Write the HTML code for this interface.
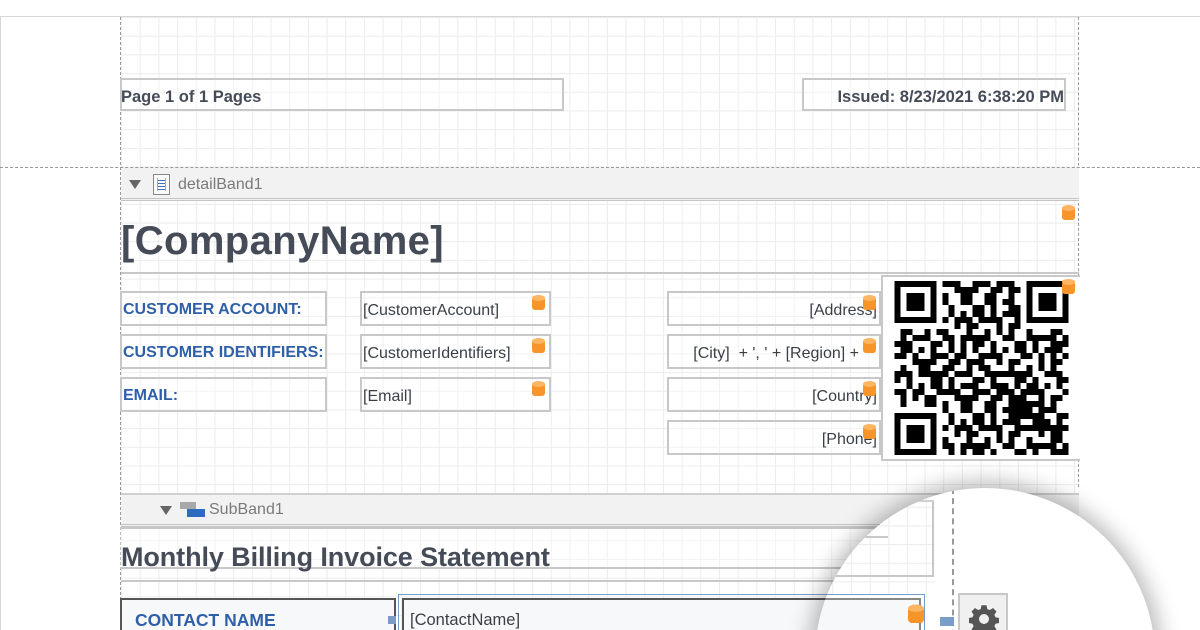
<!DOCTYPE html>
<html><head><meta charset="utf-8"><style>
*{margin:0;padding:0;box-sizing:border-box}
html,body{width:1200px;height:630px;overflow:hidden}
body{position:relative;background:#fff;font-family:"Liberation Sans",sans-serif}
.abs{position:absolute;white-space:nowrap}
.grid{left:121px;top:17px;width:958px;height:613px;background-color:#fff;
background-image:linear-gradient(#ececec 1px,transparent 1px),linear-gradient(90deg,#ececec 1px,transparent 1px);background-size:18.7px 18.7px;background-position:0 0}
.box{position:absolute;border:2px solid #c8c8c8;background:rgba(255,255,255,.35);white-space:nowrap;overflow:visible}
.lbl{color:#2e5fa8;font-weight:bold;font-size:16px;padding-left:1px;line-height:34px;letter-spacing:0;white-space:nowrap}
.val{color:#3a3f47;font-size:16px;line-height:36px;padding-left:1px;letter-spacing:0;white-space:nowrap}
.r{text-align:right;padding-right:2px}
.cyl{position:absolute;width:13px;height:17px}
.hd{color:#454c57;font-weight:bold;font-size:16px}
</style></head><body>
<div class="abs" style="left:0;top:16px;width:1200px;height:1px;background:#d6d6d6"></div>
<div class="abs" style="left:0;top:16px;width:1px;height:614px;background:#d6d6d6"></div>
<div class="abs grid"></div>
<div class="abs" style="left:120px;top:17px;height:613px;border-left:1px dashed #999"></div>
<div class="abs" style="left:1078px;top:17px;height:470px;border-left:1px dashed #999"></div>
<div class="abs" style="left:0;top:167px;width:1200px;border-top:1px dashed #999"></div>

<div class="box" style="left:120px;top:78px;width:444px;height:33px;"><div class="hd" style="line-height:34px;margin-left:-1px;font-size:16.5px">Page 1 of 1 Pages</div></div>
<div class="box" style="left:802px;top:78px;width:264px;height:33px;"><div class="hd r" style="line-height:34px;padding-right:0;font-size:16.5px">Issued: 8/23/2021 6:38:20 PM</div></div>

<div class="abs" style="left:121px;top:168px;width:958px;height:33px;background:#f2f2f2;border-bottom:3px double #c4c4c4"></div>
<div class="abs" style="left:129px;top:180px;width:0;height:0;border-left:6px solid transparent;border-right:6px solid transparent;border-top:9px solid #666"></div>
<div class="abs" style="left:153px;top:174px;width:17px;height:21px;border:1px solid #888;background:#fafafa"><div style="margin:3px 0 0 3px;width:9px;height:13px;border-left:1px solid #aaa;border-right:1px solid #aaa;background:repeating-linear-gradient(#fafafa 0 2px,#3b73c4 2px 3px)"></div></div>
<div class="abs" style="left:178px;top:176px;font-size:16px;color:#7a7a7a">detailBand1</div>

<div class="abs" style="left:121px;top:272px;width:958px;height:2px;background:#c8c8c8"></div>
<div class="abs" style="left:121px;top:219px;font-size:40px;font-weight:bold;color:#454c57;letter-spacing:0.4px">[CompanyName]</div>
<svg class="cyl" style="left:1062px;top:205px" viewBox="0 0 13 17"><rect x="0" y="2" width="13" height="13" rx="3" fill="#f7952a"/><ellipse cx="6.5" cy="3" rx="6.5" ry="3" fill="#fbb563"/></svg>

<div class="box" style="left:120px;top:291px;width:207px;height:35px"><div class="lbl">CUSTOMER ACCOUNT:</div></div>
<div class="box" style="left:120px;top:334px;width:207px;height:35px"><div class="lbl">CUSTOMER IDENTIFIERS:</div></div>
<div class="box" style="left:120px;top:377px;width:207px;height:35px"><div class="lbl">EMAIL:</div></div>
<div class="box" style="left:360px;top:291px;width:191px;height:35px"><div class="val">[CustomerAccount]</div></div>
<div class="box" style="left:360px;top:334px;width:191px;height:35px"><div class="val">[CustomerIdentifiers]</div></div>
<div class="box" style="left:360px;top:377px;width:191px;height:35px"><div class="val">[Email]</div></div>
<div class="box" style="left:667px;top:291px;width:214px;height:35px"><div class="val r">[Address]</div></div>
<div class="box" style="left:667px;top:334px;width:214px;height:35px"><div class="val r" style="padding-right:20px">[City]&nbsp; + ', ' + [Region] +</div></div>
<div class="box" style="left:667px;top:377px;width:214px;height:35px"><div class="val r">[Country]</div></div>
<div class="box" style="left:667px;top:420px;width:214px;height:35px"><div class="val r">[Phone]</div></div>
<svg class="cyl" style="left:532px;top:295px" viewBox="0 0 13 17"><rect x="0" y="2" width="13" height="13" rx="3" fill="#f7952a"/><ellipse cx="6.5" cy="3" rx="6.5" ry="3" fill="#fbb563"/></svg>
<svg class="cyl" style="left:532px;top:338px" viewBox="0 0 13 17"><rect x="0" y="2" width="13" height="13" rx="3" fill="#f7952a"/><ellipse cx="6.5" cy="3" rx="6.5" ry="3" fill="#fbb563"/></svg>
<svg class="cyl" style="left:532px;top:381px" viewBox="0 0 13 17"><rect x="0" y="2" width="13" height="13" rx="3" fill="#f7952a"/><ellipse cx="6.5" cy="3" rx="6.5" ry="3" fill="#fbb563"/></svg>
<svg class="cyl" style="left:863px;top:295px" viewBox="0 0 13 17"><rect x="0" y="2" width="13" height="13" rx="3" fill="#f7952a"/><ellipse cx="6.5" cy="3" rx="6.5" ry="3" fill="#fbb563"/></svg>
<svg class="cyl" style="left:863px;top:338px" viewBox="0 0 13 17"><rect x="0" y="2" width="13" height="13" rx="3" fill="#f7952a"/><ellipse cx="6.5" cy="3" rx="6.5" ry="3" fill="#fbb563"/></svg>
<svg class="cyl" style="left:863px;top:381px" viewBox="0 0 13 17"><rect x="0" y="2" width="13" height="13" rx="3" fill="#f7952a"/><ellipse cx="6.5" cy="3" rx="6.5" ry="3" fill="#fbb563"/></svg>
<svg class="cyl" style="left:863px;top:424px" viewBox="0 0 13 17"><rect x="0" y="2" width="13" height="13" rx="3" fill="#f7952a"/><ellipse cx="6.5" cy="3" rx="6.5" ry="3" fill="#fbb563"/></svg>

<div class="abs" style="left:881px;top:275px;width:199px;height:186px;background:#fff;border:2px solid #c8c8c8;border-right:none"></div>
<svg class="abs" style="left:894px;top:281px" width="175" height="174" viewBox="0 0 29 29" shape-rendering="crispEdges">
<defs><pattern id="p" width="7" height="6" patternUnits="userSpaceOnUse">
<rect x="0" y="0" width="2" height="1"/><rect x="3" y="0" width="1" height="2"/><rect x="5" y="1" width="2" height="1"/><rect x="1" y="2" width="1" height="2"/><rect x="4" y="3" width="2" height="1"/><rect x="0" y="4" width="1" height="1"/><rect x="2" y="4" width="1" height="2"/><rect x="6" y="4" width="1" height="2"/><rect x="4" y="5" width="1" height="1"/><rect x="5" y="2" width="1" height="1"/>
</pattern><pattern id="q" width="5" height="9" patternUnits="userSpaceOnUse">
<rect x="1" y="1" width="1" height="3"/><rect x="3" y="0" width="2" height="1"/><rect x="0" y="6" width="3" height="1"/><rect x="4" y="4" width="1" height="2"/><rect x="2" y="8" width="1" height="1"/>
</pattern></defs>
<path d="M0 0h29v29h-29z M0 0h8v8h-8z M21 0h8v8h-8z M0 21h8v8h-8z" fill="url(#p)" fill-rule="evenodd"/>
<path d="M0 0h29v29h-29z M0 0h8v8h-8z M21 0h8v8h-8z M0 21h8v8h-8z" fill="url(#q)" fill-rule="evenodd"/>
<g fill="#000"><path d="M0 0h7v7h-7zM1 1v5h5v-5zM2 2h3v3h-3z" fill-rule="evenodd"/>
<path d="M22 0h7v7h-7zM23 1v5h5v-5zM24 2h3v3h-3z" fill-rule="evenodd"/>
<path d="M0 22h7v7h-7zM1 23v5h5v-5zM2 24h3v3h-3z" fill-rule="evenodd"/>
<path d="M20 20h5v5h-5zM21 21v3h3v-3zM22 22h1v1h-1z" fill-rule="evenodd"/></g>
</svg>
<svg class="cyl" style="left:1062px;top:279px" viewBox="0 0 13 17"><rect x="0" y="2" width="13" height="13" rx="3" fill="#f7952a"/><ellipse cx="6.5" cy="3" rx="6.5" ry="3" fill="#fbb563"/></svg>

<div class="abs" style="left:121px;top:493px;width:958px;height:34px;background:#f2f2f2;border-top:2px solid #d0d0d0;border-bottom:3px double #c4c4c4"></div>
<div class="abs" style="left:160px;top:506px;width:0;height:0;border-left:6px solid transparent;border-right:6px solid transparent;border-top:9px solid #666"></div>
<div class="abs" style="left:180px;top:502px;width:16px;height:7px;background:#a8a8a8"></div>
<div class="abs" style="left:187px;top:509px;width:18px;height:8px;background:#2e6bc0"></div>
<div class="abs" style="left:209px;top:501px;font-size:16px;color:#7a7a7a">SubBand1</div>
<div class="box" style="left:120px;top:527px;width:814px;height:42px;border-left:none"></div>
<div class="abs" style="left:121px;top:542px;font-size:27px;font-weight:bold;color:#454c57;letter-spacing:-0.1px">Monthly Billing Invoice Statement</div>
<div class="abs" style="left:121px;top:580px;width:958px;height:2px;background:#c8c8c8"></div>

<div class="abs" style="left:120px;top:598px;width:276px;height:40px;background:#f7f8fa;border:2px solid #555"></div>
<div class="abs" style="left:135px;top:610px;font-size:17.5px;font-weight:bold;color:#2e5fa8">CONTACT NAME</div>
<div class="abs" style="left:388px;top:616px;width:8px;height:8px;background:#7a9cc8"></div>
<div class="abs" style="left:398px;top:594px;width:542px;height:50px;border:1px solid #7a9cc8"></div>
<div class="abs" style="left:402px;top:598px;width:534px;height:40px;border:2px solid #555;background:#f7f8fa"></div>
<div class="abs" style="left:410px;top:611px;font-size:16.5px;color:#3a3f47">[ContactName]</div>

<div class="abs" style="left:815px;top:488px;width:340px;height:340px;border-radius:50%;background:#fff;box-shadow:0 0 22px 6px rgba(0,0,0,.28)"></div>
<div class="abs" style="left:815px;top:488px;width:340px;height:340px;border-radius:50%;overflow:hidden">
 <div class="abs" style="left:-20px;top:0;width:140px;height:110px;background-color:#fff;background-image:linear-gradient(#ececec 1px,transparent 1px),linear-gradient(90deg,#ececec 1px,transparent 1px);background-size:18.7px 18.7px"></div>
 <div class="abs" style="left:-20px;top:12px;width:139px;height:77px;border:2px solid #c8c8c8;border-left:none;border-top:none;background:transparent"></div>
 <div class="abs" style="left:-20px;top:12px;width:139px;height:2px;background:#d0d0d0"></div>
 <div class="abs" style="left:-20px;top:48px;width:93px;height:2px;background:#c8c8c8"></div>
 <div class="abs" style="left:-20px;top:106px;width:130px;height:100px;border:1px solid #7a9cc8;border-left:none;background:#fff"></div>
 <div class="abs" style="left:-20px;top:110px;width:126px;height:100px;border:2px solid #888;border-left:none;background:#f7f8fa"></div>
 <svg class="abs" style="left:93px;top:116px" width="16" height="22" viewBox="0 0 13 17"><rect x="0" y="2" width="13" height="13" rx="3" fill="#f7952a"/><ellipse cx="6.5" cy="3" rx="6.5" ry="3" fill="#fbb563"/></svg>
 <div class="abs" style="left:137px;top:0;height:340px;border-left:2px dashed #999"></div>
 <div class="abs" style="left:125px;top:129px;width:14px;height:9px;background:#7a9cc8"></div>
 <div class="abs" style="left:143px;top:105px;width:50px;height:60px;background:#f0f0f0;border:2px solid #c8c8c8"></div>
 <svg class="abs" style="left:154px;top:116px" width="30" height="30" viewBox="0 0 24 24"><path fill="#555" d="M10 1h4l.6 3 2 .9 2.6-1.7 2.8 2.8-1.7 2.6.9 2 3 .6v4l-3 .6-.9 2 1.7 2.6-2.8 2.8-2.6-1.7-2 .9-.6 3h-4l-.6-3-2-.9-2.6 1.7-2.8-2.8 1.7-2.6-.9-2-3-.6v-4l3-.6.9-2-1.7-2.6 2.8-2.8 2.6 1.7 2-.9zM12 8a4 4 0 1 0 0 8 4 4 0 0 0 0-8z"/></svg>
</div>
</body></html>
